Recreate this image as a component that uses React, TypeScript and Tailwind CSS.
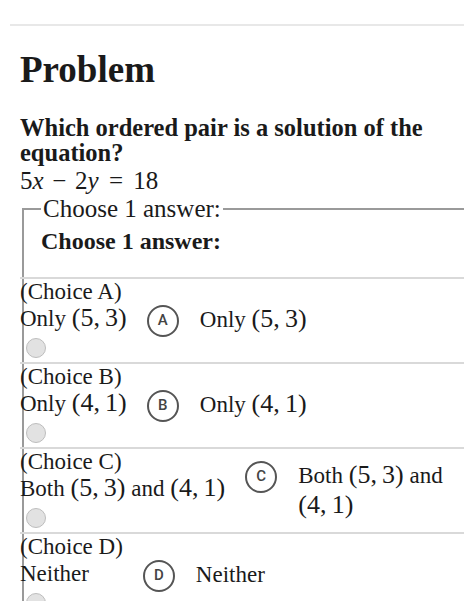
import React from "react";

const serif = "font-['Liberation_Serif',serif]";

function Pair({ a, b }: { a: string; b: string }) {
  return (
    <span className="text-[26px] leading-none whitespace-nowrap">
      ({a},<span className="ml-[0.2em]">{b}</span>)
    </span>
  );
}

type Choice = { id: string; content: React.ReactNode };

const choices: Choice[] = [
  { id: "A", content: <>Only <Pair a="5" b="3" /></> },
  { id: "B", content: <>Only <Pair a="4" b="1" /></> },
  {
    id: "C",
    content: (
      <>
        Both <Pair a="5" b="3" /> and <Pair a="4" b="1" />
      </>
    ),
  },
  { id: "D", content: <>Neither</> },
];

function Row({ c }: { c: Choice }) {
  return (
    <li className="flex items-center border-t-2 border-[#d9d9d9]">
      <div className="shrink-0 text-[23px]">
        <div className="leading-[26px] whitespace-nowrap">(Choice {c.id})</div>
        <div className="leading-[28px] whitespace-nowrap">{c.content}</div>
        <div className="ml-[6px] mt-[5px] mb-[4px] h-[20px] w-[20px] rounded-full border border-[#bdbdbd] bg-[#e2e2e2]" />
      </div>
      <div className="ml-[20px] flex min-w-0 items-start gap-[21px]">
        <div className="flex h-[32px] w-[32px] shrink-0 items-center justify-center rounded-full border-[2.5px] border-[#555555] font-['Roboto',sans-serif] text-[15px] font-medium text-[#444444]">
          {c.id}
        </div>
        <div className="min-w-0 text-[23px] leading-[30px]">{c.content}</div>
      </div>
    </li>
  );
}

export default function App() {
  return (
    <div className={`h-[601px] w-[474px] overflow-hidden bg-white text-[#1a1a1a] ${serif}`}>
      <div className="mx-[10px] pt-[24px]">
        <div className="h-[2px] bg-[#e8e8e8]" />
        <div className="pl-[10px]">
          <h1 className="mt-[24px] text-[37px] font-bold leading-[40px]">Problem</h1>
          <p className="mt-[25px] text-[24.5px] font-bold leading-[25px]">
            Which ordered pair is a solution of the equation?
          </p>
          <div className="mt-[1px] whitespace-nowrap text-[25px] leading-[29px]">
            5<i>x</i>
            <span className="mx-[0.24em] inline-block w-[0.78em] text-center">−</span>2<i>y</i>
            <span className="mx-[0.3em] inline-block w-[0.78em] text-center">=</span>18
          </div>
          <fieldset className="ml-[2px] border-l-2 border-t-2 border-[#9a9a9a] pl-[17px]">
            <legend className="px-[2px] text-[25px] leading-[28px]">Choose 1 answer:</legend>
            <div className="pt-[4px] pb-[22px] text-[24px] font-bold leading-[28px]">Choose 1 answer:</div>
            <ul className="ml-[-21px]">
              {choices.map((c) => (
                <Row key={c.id} c={c} />
              ))}
            </ul>
          </fieldset>
        </div>
      </div>
    </div>
  );
}
